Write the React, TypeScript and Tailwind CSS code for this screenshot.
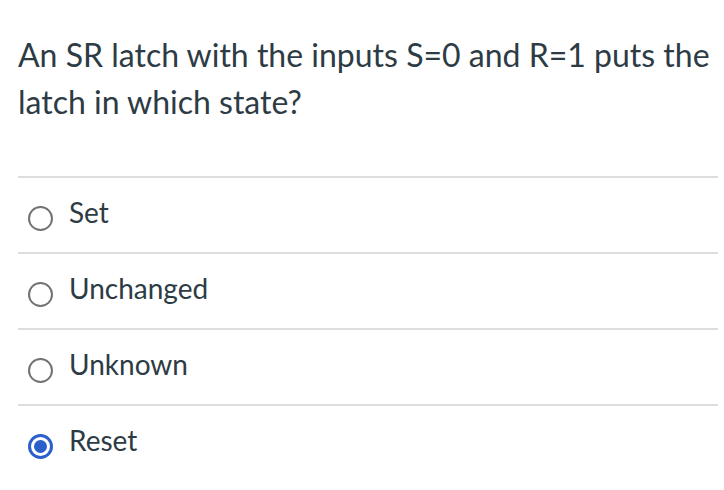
import { useState } from 'react';

const options = ['Set', 'Unchanged', 'Unknown', 'Reset'];

export default function App() {
  const [selected, setSelected] = useState('Reset');

  return (
    <div
      className="min-h-[490px] w-[724px] bg-white pl-[18px] pr-[6px] pt-[31px] text-[#2d3b45]"
      style={{ fontFamily: 'Lato, "Noto Sans", sans-serif' }}
    >
      {/* Question */}
      <p className="text-[32px] leading-[47px]">
        An SR latch with the inputs S=0 and R=1 puts the latch in which state?
      </p>

      {/* Answers */}
      <div className="mt-[51px]">
        {options.map((opt) => (
          <label
            key={opt}
            className="flex h-[76px] cursor-pointer items-start border-t-2 border-[#dedede] pl-[10px] pt-[17px]"
          >
            <input
              type="radio"
              name="answer"
              className="sr-only"
              checked={selected === opt}
              onChange={() => setSelected(opt)}
            />
            {selected === opt ? (
              <span className="mt-[11px] flex h-[25px] w-[25px] items-center justify-center rounded-full border-[3px] border-[#2b5fcb] bg-white">
                <span className="h-[13px] w-[13px] rounded-full bg-[#2b5fcb]" />
              </span>
            ) : (
              <span className="mt-[11px] h-[25px] w-[25px] rounded-full border-2 border-[#737373] bg-white" />
            )}
            <span className="ml-[16px] text-[28px] leading-[34px]">{opt}</span>
          </label>
        ))}
      </div>
    </div>
  );
}
